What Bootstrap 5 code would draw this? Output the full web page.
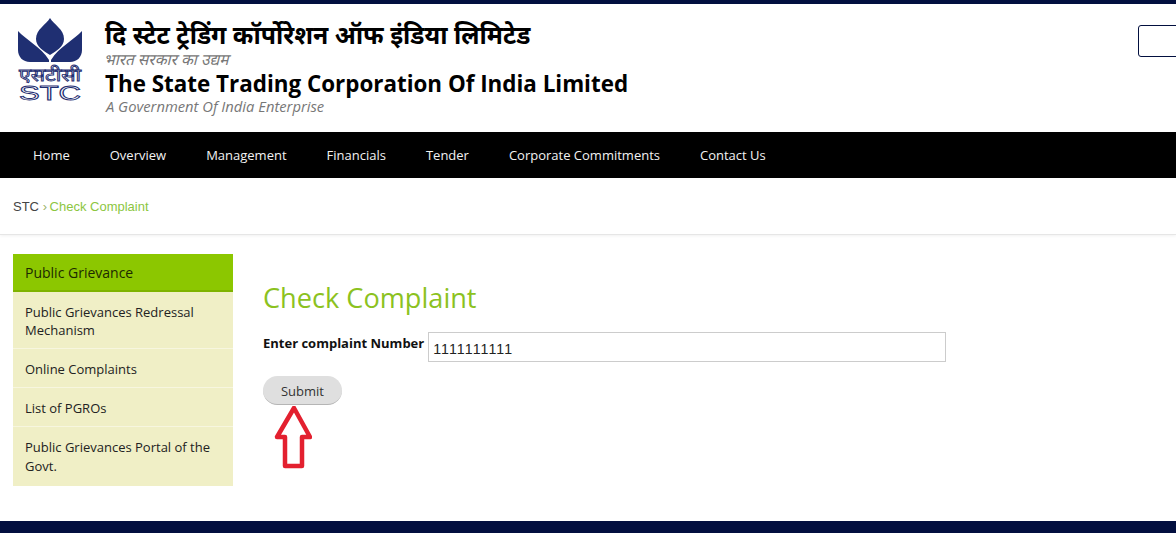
<!DOCTYPE html>
<html lang="en">
<head>
    <meta charset="UTF-8">
    <meta name="viewport" content="width=device-width, initial-scale=1.0">
    <title>Check Complaint</title>
    <link href="https://cdn.jsdelivr.net/npm/bootstrap@5.3.0/dist/css/bootstrap.min.css" rel="stylesheet">
    <style>
        html, body {
            height: 533px;
            overflow: hidden;
        }
        body {
            font-family: "Open Sans", "Noto Sans", sans-serif;
            font-size: 13px;
            color: #222;
            background-color: #fff;
        }
        .top-strip {
            height: 4px;
            background-color: #020f3f;
        }
        .site-head {
            height: 128px;
            padding-left: 17px;
        }
        .site-logo {
            width: 66px;
            margin-top: 13px;
        }
        .site-names {
            margin-left: 22px;
            padding-top: 15px;
        }
        .name-hi {
            font-size: 24.8px;
            font-weight: 700;
            line-height: 31px;
            color: #000;
        }
        .tag-hi {
            height: 18px;
            margin-left: -2px;
            font-size: 15.5px;
            line-height: 18px;
            color: #777;
            transform: skewX(-14deg);
            transform-origin: 10px bottom;
        }
        .name-en {
            font-size: 22.4px;
            font-weight: 700;
            line-height: 31px;
            color: #000;
        }
        .tag-en {
            margin-top: -1px;
            padding-left: 1px;
            font-size: 14.75px;
            font-style: italic;
            line-height: 17px;
            color: #777;
        }
        .head-box {
            width: 60px;
            height: 32px;
            margin-top: 21px;
            margin-right: -22px;
            border: 1px solid #020f3f;
            border-radius: 3px;
        }
        .main-menu {
            height: 46px;
            padding-left: 13px;
            background-color: #000;
        }
        .main-menu .nav-link {
            padding: 0 20px;
            font-size: 13px;
            line-height: 46px;
            color: #f2f2f2;
        }
        .crumb-bar {
            height: 57px;
            padding-left: 13px;
            font-family: "Liberation Sans", Arial, sans-serif;
            font-size: 13px;
            line-height: 57px;
            color: #444;
            border-bottom: 1px solid #e6e6e6;
            box-shadow: 0 1px 3px rgba(0, 0, 0, .06);
        }
        .crumb-bar span {
            color: #8cc63f;
        }
        .crumb-bar .crumb-sep {
            margin-right: -1px;
            color: #9db56d;
        }
        .page-body {
            padding: 19px 0 0 13px;
        }
        .side-menu {
            width: 220px;
            flex: none;
        }
        .side-title {
            height: 38px;
            padding-left: 12px;
            font-size: 14px;
            line-height: 37px;
            color: #1c2a00;
            background-color: #8cc700;
            border-bottom: 2px solid #7fb300;
        }
        .side-menu .list-group-item {
            padding: 11px 12px 9px;
            font-size: 13px;
            line-height: 18px;
            color: #222;
            background-color: #f0efc6;
            border: 0;
            border-bottom: 1px solid #f7f6df;
            border-radius: 0;
        }
        .side-menu .list-group-item:last-child {
            padding-bottom: 10px;
            line-height: 19px;
            border-bottom: 0;
        }
        .check-form {
            position: relative;
            margin-left: 30px;
            padding-top: 26px;
        }
        .check-title {
            margin: 0 0 16px;
            font-size: 27.15px;
            font-weight: 400;
            line-height: 36px;
            color: #8cc21f;
        }
        .check-label {
            margin: 0 4px 0 0;
            font-size: 13px;
            font-weight: 700;
            line-height: 22px;
            color: #111;
        }
        .check-input {
            width: 518px;
            height: 30px;
            padding: 3px 4px 0;
            font-family: "Liberation Sans", Arial, sans-serif;
            font-size: 14.2px;
            font-kerning: none;
            color: #222;
            border: 1px solid #ccc;
            border-radius: 0;
        }
        .submit-btn {
            display: block;
            width: 79px;
            height: 29px;
            margin-top: 14px;
            padding: 3px 0 0;
            font-size: 13px;
            color: #333;
            background-color: #dfdfdf;
            border: 0;
            border-bottom: 1px solid #b5b5b5;
            border-radius: 15px;
        }
        .red-arrow {
            position: absolute;
            left: 11px;
            top: 152px;
            width: 38px;
            height: 63px;
        }
        .site-foot {
            position: absolute;
            left: 0;
            right: 0;
            top: 521px;
            height: 12px;
            background-color: #020f3f;
        }
    </style>
</head>
<body>
    <div class="top-strip"></div>

    <header class="site-head d-flex justify-content-between overflow-hidden">
        <div class="d-flex">
            <svg class="site-logo" height="88" viewBox="0 0 66 88" role="img" aria-label="STC logo">
                <path d="M33 1 C37 8 47 12 47 22 C47 30 39 34 33 38 C27 34 19 30 19 22 C19 12 29 8 33 1 Z" fill="#1f2f72"/>
                <path d="M1 14 C8 22 24 30 32 43 L32 45 L13 45 C6 45 1 40 1 33 Z" fill="#1f2f72"/>
                <path d="M65 14 C58 22 42 30 34 43 L34 45 L53 45 C60 45 65 40 65 33 Z" fill="#1f2f72"/>
                <text x="33" y="64" text-anchor="middle" font-family="'Noto Sans', sans-serif" font-size="17" fill="#fff" stroke="#1f2f72" stroke-width=".9" textLength="62" lengthAdjust="spacingAndGlyphs">एसटीसी</text>
                <text x="33" y="83" text-anchor="middle" font-family="'Liberation Sans', sans-serif" font-size="20" fill="#fff" stroke="#1f2f72" stroke-width=".9" textLength="62" lengthAdjust="spacingAndGlyphs">STC</text>
            </svg>
            <div class="site-names">
                <div class="name-hi">दि स्टेट ट्रेडिंग कॉर्पोरेशन ऑफ इंडिया लिमिटेड</div>
                <div class="tag-hi">भारत सरकार का उद्यम</div>
                <div class="name-en">The State Trading Corporation Of India Limited</div>
                <div class="tag-en">A Government Of India Enterprise</div>
            </div>
        </div>
        <div class="head-box"></div>
    </header>

    <nav class="main-menu nav">
        <a class="nav-link" href="#">Home</a>
        <a class="nav-link" href="#">Overview</a>
        <a class="nav-link" href="#">Management</a>
        <a class="nav-link" href="#">Financials</a>
        <a class="nav-link" href="#">Tender</a>
        <a class="nav-link" href="#">Corporate Commitments</a>
        <a class="nav-link" href="#">Contact Us</a>
    </nav>

    <div class="crumb-bar">STC <span class="crumb-sep">›</span> <span>Check Complaint</span></div>

    <div class="page-body d-flex">
        <aside class="side-menu">
            <div class="side-title">Public Grievance</div>
            <div class="list-group list-group-flush">
                <a class="list-group-item" href="#">Public Grievances Redressal Mechanism</a>
                <a class="list-group-item" href="#">Online Complaints</a>
                <a class="list-group-item" href="#">List of PGROs</a>
                <a class="list-group-item" href="#">Public Grievances Portal of the Govt.</a>
            </div>
        </aside>
        <main class="check-form">
            <h1 class="check-title">Check Complaint</h1>
            <div class="d-flex align-items-start">
                <label class="check-label" for="complaintNo">Enter complaint Number</label>
                <input class="check-input" id="complaintNo" type="text" value="1111111111">
            </div>
            <button class="submit-btn" type="button">Submit</button>
            <svg class="red-arrow" viewBox="0 0 38 63" aria-hidden="true">
                <path d="M20 2 L36 31 L28 31 L28 60 L11 60 L11 31 L3 31 Z" fill="none" stroke="#e3202f" stroke-width="4.5" stroke-linejoin="round"/>
            </svg>
        </main>
    </div>

    <footer class="site-foot"></footer>
    <script src="https://cdn.jsdelivr.net/npm/bootstrap@5.3.0/dist/js/bootstrap.bundle.min.js"></script>
</body>
</html>
